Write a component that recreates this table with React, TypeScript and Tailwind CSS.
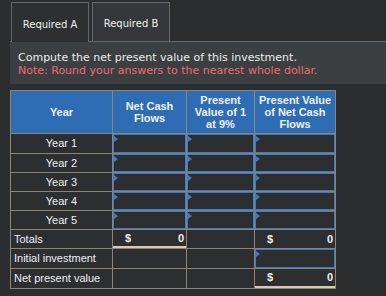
import React from "react";

const GRID = "#8c8475";
const BLUE = "#3d7bc6";

function Input() {
  return (
    <div className="relative h-full bg-[#2c2e30] border border-[#3d7bc6]">
      <div className="absolute left-0 top-[1px] w-0 h-0 border-y-[3px] border-y-transparent border-l-[4px] border-l-[#3d7bc6]" />
    </div>
  );
}

function Cell({ children, className = "" }: { children?: React.ReactNode; className?: string }) {
  return <div className={`bg-[#2c2e30] ${className}`}>{children}</div>;
}

function Money({ underline = false }: { underline?: boolean }) {
  return (
    <div
      className={`h-full bg-[#2c2e30] flex items-center justify-between pl-[12px] pr-[2px] text-[11px] font-bold text-[#f0f0f0] ${
        underline ? "border-b-2 border-[#d9cab2]" : ""
      }`}
    >
      <span>$</span>
      <span>0</span>
    </div>
  );
}

export default function App() {
  const years = ["Year 1", "Year 2", "Year 3", "Year 4", "Year 5"];
  return (
    <div className="w-[386px] h-[296px] bg-[#2b2d2f] overflow-hidden" style={{ fontFamily: '"Liberation Sans", Arial, sans-serif' }}>
      {/* Tabs */}
      <div className="flex gap-[3px] pl-[11px] pt-[2px]" style={{ fontFamily: '"DejaVu Sans", sans-serif' }}>
        <div className="relative z-10 w-[78px] h-[40px] -mb-px border border-b-0 border-[#676a6d] bg-[#2d2f31] flex items-center justify-center pt-[3px] text-[10px] text-[#f2f2f2]">
          Required A
        </div>
        <div className="w-[78px] h-[39px] border border-b-0 border-[#676a6d] bg-[#35373a] flex items-center justify-center pt-[3px] text-[10px] text-[#f2f2f2]">
          Required B
        </div>
      </div>
      {/* Panel */}
      <div
        className="ml-[10px] h-[43px] border-t border-[#676a6d] bg-[#3c3f42] pl-[8px] pt-[9px] text-[11px] leading-[13px]"
        style={{ fontFamily: '"DejaVu Sans", sans-serif' }}
      >
        <div className="text-[#ececec]">Compute the net present value of this investment.</div>
        <div className="text-[#ec6b6b]">Note: Round your answers to the nearest whole dollar.</div>
      </div>
      {/* Table */}
      <div
        className="mt-[6px] ml-[10px] w-[326px] grid gap-px border border-[#8c8475] bg-[#8c8475] text-[11px] text-[#f0f0f0]"
        style={{
          gridTemplateColumns: "101px 73px 67px 80px",
          gridTemplateRows: "42px 19px 18px 18px 18px 18px 18px 19px 19px",
        }}
      >
        <div className="bg-[#2e6db3] flex items-center justify-center font-bold leading-[12px] text-center">Year</div>
        <div className="bg-[#2e6db3] flex items-center justify-center font-bold leading-[12px] text-center">
          Net Cash<br />Flows
        </div>
        <div className="bg-[#2e6db3] flex items-center justify-center font-bold leading-[12px] text-center">
          Present<br />Value of 1<br />at 9%
        </div>
        <div className="bg-[#2e6db3] flex items-center justify-center font-bold leading-[12px] text-center">
          Present Value<br />of Net Cash<br />Flows
        </div>
        {years.map((y) => (
          <React.Fragment key={y}>
            <Cell className="flex items-center justify-center">{y}</Cell>
            <Input />
            <Input />
            <Input />
          </React.Fragment>
        ))}
        <Cell className="flex items-center pl-[3px]">Totals</Cell>
        <Money underline />
        <Cell />
        <Money />
        <Cell className="flex items-center pl-[3px]">Initial investment</Cell>
        <Cell />
        <Cell />
        <Input />
        <Cell className="flex items-center pl-[3px]">Net present value</Cell>
        <Cell />
        <Cell />
        <Money underline />
      </div>
    </div>
  );
}
